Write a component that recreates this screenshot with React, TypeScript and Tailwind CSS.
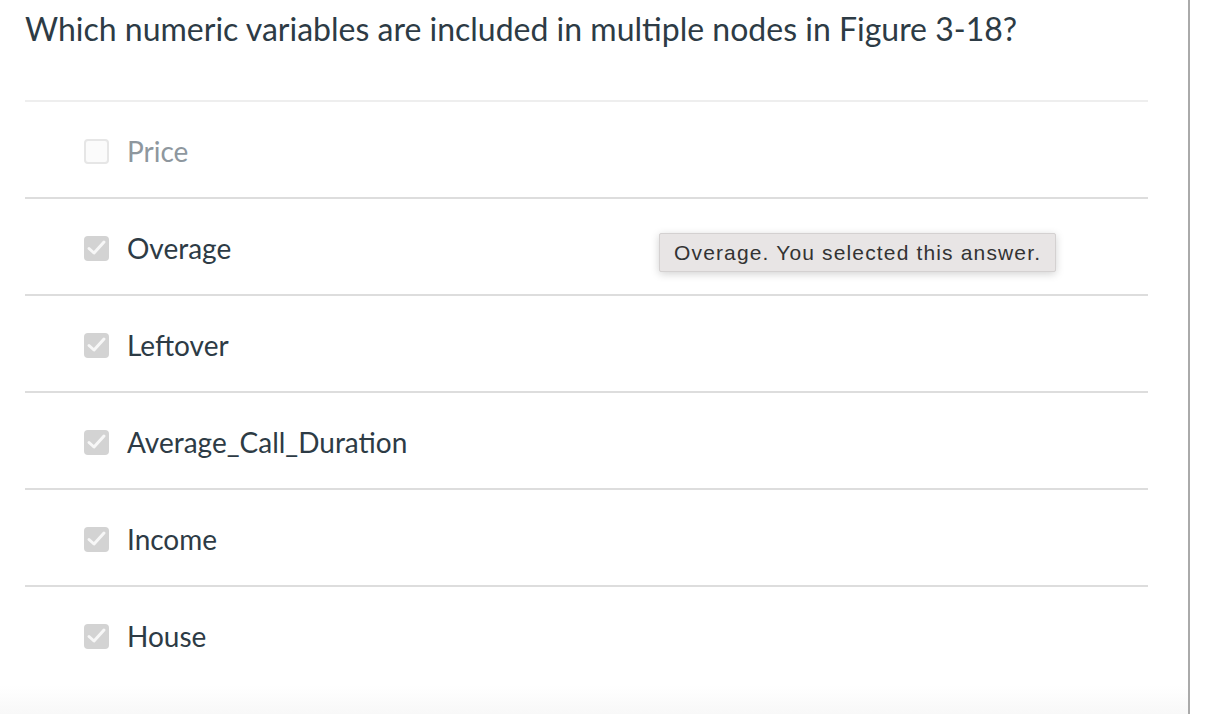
const answers = [
  { label: 'Price', checked: false },
  { label: 'Overage', checked: true },
  { label: 'Leftover', checked: true },
  { label: 'Average_Call_Duration', checked: true },
  { label: 'Income', checked: true },
  { label: 'House', checked: true },
]

function Box({ checked }: { checked: boolean }) {
  if (!checked) {
    return <div className="w-[25px] h-[25px] rounded-[4px] border-2 border-[#e6e6e6] bg-[#fbfbfb] shrink-0" />
  }
  return (
    <div className="w-[25px] h-[25px] rounded-[4px] bg-[#d3d3d3] shrink-0">
      <svg width="25" height="25" viewBox="0 0 25 25">
        <path d="M5 12.5 L10 17 L20 6" fill="none" stroke="#f7f7f7" strokeWidth="3" strokeLinecap="round" strokeLinejoin="round" />
      </svg>
    </div>
  )
}

export default function App() {
  return (
    <div className="w-[1190px] h-[714px] border-r-2 border-[#aaaaaa] bg-gradient-to-b from-white from-[96%] to-[#f8f8f8] font-['Lato',sans-serif] text-[#2d3b45]">
      <h1 className="pl-[25px] pt-[10px] text-[32px] leading-[38px] font-normal">
        Which numeric variables are included in multiple nodes in Figure 3-18?
      </h1>

      <div className="ml-[25px] w-[1123px] mt-[52px]">
        {answers.map((a, i) => (
          <div
            key={a.label}
            className={
              'relative h-[97px] flex items-center border-t-2 ' +
              (i === 0 ? 'border-[#eeeeee]' : 'border-[#dddddd]')
            }
          >
            <div className="ml-[59px] pt-[3px] flex items-center gap-[18px]">
              <Box checked={a.checked} />
              <span className={'text-[28px] leading-[34px] ' + (a.checked ? 'text-[#2d3b45]' : 'text-[#8e979e]')}>{a.label}</span>
            </div>
            {a.label === 'Overage' && (
              <div className="absolute left-[634px] top-[34px] h-[39px] px-[14px] flex items-center bg-[#e8e5e5] border border-[#d4d1d1] rounded-[2px] shadow-[0_2px_8px_rgba(0,0,0,0.18)] font-['Liberation_Sans',sans-serif] text-[21px] text-[#333333] tracking-[1.15px] whitespace-nowrap">
                Overage. You selected this answer.
              </div>
            )}
          </div>
        ))}
      </div>
    </div>
  )
}
